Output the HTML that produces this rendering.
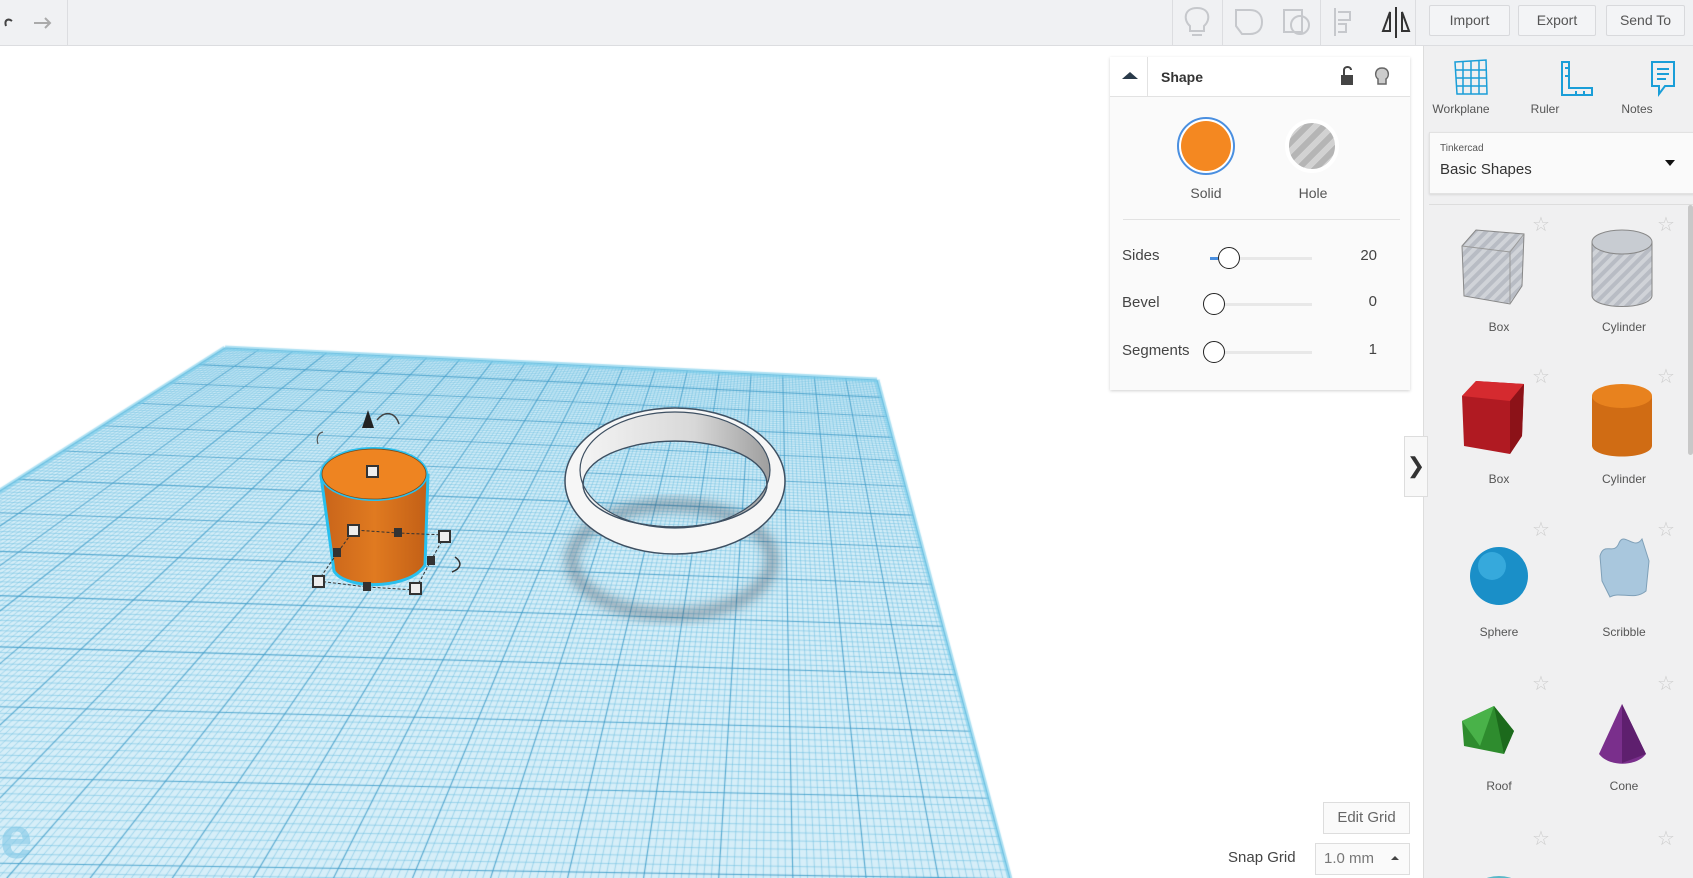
<!DOCTYPE html>
<html><head><meta charset="utf-8">
<style>
*{box-sizing:border-box;margin:0;padding:0}
body{width:1693px;height:878px;overflow:hidden;background:#fff;font-family:"Liberation Sans",sans-serif;color:#333;position:relative}
.abs{position:absolute}
#top{left:0;top:0;width:1693px;height:46px;background:#f0f1f3;border-bottom:1px solid #dcdde0}
.sep{position:absolute;top:0;width:1px;height:45px;background:#dcdde0}
.btn{position:absolute;top:5px;height:31px;border:1px solid #d8d9dc;background:#f3f4f6;border-radius:2px;font-size:14px;color:#555;text-align:center;line-height:29px}
#rp{left:1423px;top:46px;width:270px;height:832px;background:#f0f0f1;border-left:1px solid #ddd;overflow:hidden}
.lbl{position:absolute;font-size:12px;color:#555;text-align:center;width:100px}
#sp{left:1110px;top:57px;width:300px;height:333px;background:#fafafa;box-shadow:0 1px 3px rgba(0,0,0,.18)}
.row{position:absolute;left:12px;font-size:15px;color:#444}
.track{position:absolute;left:100px;width:102px;height:3px;background:#e8e8e8}
.knob{position:absolute;width:22px;height:22px;border:1.5px solid #222;border-radius:50%;background:#fff}
.val{position:absolute;right:33px;font-size:15px;color:#444}
.star{position:absolute;font-size:20px;color:#ccc}
.sl{position:absolute;font-size:12px;color:#555;width:120px;text-align:center}
</style></head><body>
<canvas id="cv" class="abs" width="1423" height="878" style="left:0;top:0"></canvas>

<svg class="abs" style="left:0;top:0" width="1423" height="878">
 <defs><filter id="bl"><feGaussianBlur stdDeviation="5"/></filter>
 <linearGradient id="og" x1="0" x2="1"><stop offset="0" stop-color="#c8641a"/><stop offset=".5" stop-color="#e07a20"/><stop offset="1" stop-color="#c25f16"/></linearGradient>
 <linearGradient id="wg" x1="0" x2="1"><stop offset="0" stop-color="#f4f4f4"/><stop offset=".6" stop-color="#d8d8d8"/><stop offset="1" stop-color="#9e9e9e"/></linearGradient></defs>
 <ellipse cx="672" cy="560" rx="100" ry="55" fill="none" stroke="rgba(60,70,80,.35)" stroke-width="14" filter="url(#bl)"/>
 <!-- ring body with hole -->
 <path fill-rule="evenodd" fill="#f6f6f6" stroke="#3e5062" stroke-width="1.5"
  d="M565 481 A110 73 0 1 0 785 481 A110 73 0 1 0 565 481Z M583 484 A92 43 0 1 0 767 484 A92 43 0 1 0 583 484Z"/>
 <!-- inner wall -->
 <path fill-rule="evenodd" fill="url(#wg)" stroke="#3e5062" stroke-width="1.2"
  d="M580 470 A95 58 0 1 0 770 470 A95 58 0 1 0 580 470Z M583 484 A92 43 0 1 0 767 484 A92 43 0 1 0 583 484Z"/>
 <!-- cylinder -->
 <path d="M321 476 L334 571 C345 590 410 590 425 565 L428 475Z" fill="url(#og)" stroke="#29c0ee" stroke-width="3"/>
 <ellipse cx="374" cy="474" rx="53" ry="26" fill="#ee8421" stroke="#29c0ee" stroke-width="2"/>
 <ellipse cx="374" cy="474" rx="52" ry="25" fill="#ee8421" stroke="#7a4a1a" stroke-width=".8"/>
 <g stroke="#333" stroke-width="1" stroke-dasharray="3 2" fill="none"><path d="M318 581 L367 587 L415 590 L445 535"/><path d="M318 581 L338 552 L354 530 L398 533 L445 535"/></g>
 <g fill="#333"><rect x="333" y="548" width="8" height="9"/><rect x="394" y="528" width="8" height="9"/><rect x="363" y="582" width="8" height="9"/><rect x="427" y="556" width="8" height="9"/></g>
 <g fill="#eee" stroke="#333" stroke-width="2"><rect x="367" y="466" width="11" height="11"/><rect x="348" y="525" width="11" height="11"/><rect x="439" y="531" width="11" height="11"/><rect x="313" y="576" width="11" height="11"/><rect x="410" y="583" width="11" height="11"/></g>
 <path d="M362 428 L368 410 L374 428Z" fill="#222"/>
 <path d="M377 420 C385 410 395 412 399 424" stroke="#444" stroke-width="1.5" fill="none"/>
 <path d="M318 444 C316 438 318 433 323 432" stroke="#555" stroke-width="1.2" fill="none"/>
 <path d="M455 557 C462 562 462 568 452 572" stroke="#333" stroke-width="1.5" fill="none"/>
 <text x="0" y="858" font-size="58" font-weight="bold" fill="rgba(130,200,230,.6)" font-family="Liberation Sans">e</text>
</svg>

<div id="top" class="abs">
 <svg class="abs" style="left:0;top:12px" width="60" height="20"><path d="M6 14 C4 8 8 6 12 9" stroke="#444" stroke-width="2" fill="none"/><path d="M34 11 H50 M45 6 L50 11 L45 16" stroke="#aaa" stroke-width="2" fill="none"/></svg>
 <div class="sep" style="left:67px"></div>
 <div class="sep" style="left:1172px"></div><div class="sep" style="left:1222px"></div><div class="sep" style="left:1320px"></div><div class="sep" style="left:1415px"></div>
 <svg class="abs" style="left:1180px;top:0" width="240" height="45" fill="none" stroke="#c6c8cc" stroke-width="2">
  <path d="M10 26 C3 20 4 8 17 8 C30 8 31 20 24 26 V31 H10Z M12 35 H22"/>
  <path d="M56 10 H70 C78 10 82 15 82 22 C82 30 77 34 70 34 H62 L56 26Z"/>
  <rect x="104" y="10" width="18" height="22"/><circle cx="120" cy="25" r="9"/>
  <path d="M155 8 V36 M158 12 H170 V20 H158 M158 24 H166 V32 H158"/>
  <path d="M203 31 L210 12 V31Z M216 7 V38 M222 12 V31 H229Z" stroke="#333"/>
 </svg>
 <div class="btn" style="left:1429px;width:81px">Import</div>
 <div class="btn" style="left:1518px;width:78px">Export</div>
 <div class="btn" style="left:1606px;width:79px">Send To</div>
</div>

<div id="rp" class="abs">
 <svg class="abs" style="left:28px;top:12px" width="240" height="44" fill="none" stroke="#1a9ed8" stroke-width="2">
  <path d="M3 4 L34 2 L35 36 L5 36Z M11 3 V36 M19 3 V36 M27 3 V36 M4 12 H35 M4 20 H35 M4 28 H35" stroke-width="1.5"/>
  <path d="M110 4 H117 V30 H140 V37 H110Z M113 10 H116 M113 18 H116 M124 33 V36 M132 33 V36"/>
  <path d="M200 4 H222 V28 H213 L207 36 V28 H200Z M205 11 H217 M205 16 H217 M205 21 H214"/>
 </svg>
 <div class="lbl" style="left:-13px;top:56px">Workplane</div>
 <div class="lbl" style="left:71px;top:56px">Ruler</div>
 <div class="lbl" style="left:163px;top:56px">Notes</div>
 <div class="abs" style="left:5px;top:86px;width:265px;height:62px;background:#fafafa;border:1px solid #e2e2e2;box-shadow:0 1px 2px rgba(0,0,0,.1)">
  <div class="abs" style="left:10px;top:10px;font-size:10px;color:#555">Tinkercad</div>
  <div class="abs" style="left:10px;top:28px;font-size:15px;color:#333">Basic Shapes</div>
  <div class="abs" style="left:235px;top:27px;border:5px solid transparent;border-top:6px solid #111"></div>
 </div>
 <div class="abs" style="left:5px;top:158px;width:265px;height:1px;background:#ddd"></div>
 <div class="abs" style="left:264px;top:159px;width:5px;height:250px;background:#c8c8c8;border-radius:3px"></div>
 <svg class="abs" style="left:0;top:160px" width="262" height="672">
  <defs><pattern id="hs" width="8" height="8" patternUnits="userSpaceOnUse" patternTransform="rotate(45)"><rect width="8" height="8" fill="#b8bcc4"/><rect width="4" height="8" fill="#d0d3d8"/></pattern></defs>
  <path d="M38 40 L52 24 L100 28 L98 80 L86 98 L40 90Z" fill="url(#hs)" stroke="#888"/>
  <path d="M38 40 L86 46 L100 28 M86 46 L86 98" stroke="#999" fill="none"/>
  <path d="M168 36 V90 C170 104 226 104 228 90 V36Z" fill="url(#hs)" stroke="#888"/><ellipse cx="198" cy="36" rx="30" ry="12" fill="#c8ccd2" stroke="#888"/>
  <path d="M38 190 L52 175 L100 178 L98 230 L86 248 L40 240Z" fill="#b01a22"/><path d="M38 190 L52 175 L100 178 L86 195Z" fill="#d52a2f"/><path d="M86 195 L100 178 L98 230 L86 248Z" fill="#8c1218"/>
  <path d="M168 190 V240 C170 254 226 254 228 240 V190Z" fill="#d06c14"/><ellipse cx="198" cy="190" rx="30" ry="12" fill="#e8821e"/>
  <circle cx="75" cy="370" r="29" fill="#1a8fc8"/><circle cx="68" cy="360" r="14" fill="#36a9dc"/>
  <path d="M176 350 C180 335 190 350 195 337 C200 325 210 345 218 333 L225 355 L222 385 C210 395 196 385 186 391 L178 375Z" fill="#a9c7dd" stroke="#7fa0b8"/>
  <path d="M38 515 L70 500 L90 525 L80 548 L40 540Z" fill="#2e8c2e"/><path d="M70 500 L90 525 L80 548Z" fill="#1c6a1c"/><path d="M38 515 L70 500 L56 540Z" fill="#49b249"/>
  <path d="M198 498 L175 548 C185 561 212 561 222 548Z" fill="#7a2f8c"/><path d="M198 498 L198 557 L222 548Z" fill="#5e1f6e"/>
  <ellipse cx="75" cy="690" rx="28" ry="20" fill="#5ab8c8"/><path d="M175 680 L225 677 L228 690 L172 693Z" fill="#c0202a"/>
 </svg>
 <span class="star" style="left:108px;top:166px">☆</span><span class="star" style="left:233px;top:166px">☆</span>
 <span class="star" style="left:108px;top:318px">☆</span><span class="star" style="left:233px;top:318px">☆</span>
 <span class="star" style="left:108px;top:471px">☆</span><span class="star" style="left:233px;top:471px">☆</span>
 <span class="star" style="left:108px;top:625px">☆</span><span class="star" style="left:233px;top:625px">☆</span>
 <span class="star" style="left:108px;top:780px">☆</span><span class="star" style="left:233px;top:780px">☆</span>
 <div class="sl" style="left:15px;top:274px">Box</div><div class="sl" style="left:140px;top:274px">Cylinder</div>
 <div class="sl" style="left:15px;top:426px">Box</div><div class="sl" style="left:140px;top:426px">Cylinder</div>
 <div class="sl" style="left:15px;top:579px">Sphere</div><div class="sl" style="left:140px;top:579px">Scribble</div>
 <div class="sl" style="left:15px;top:733px">Roof</div><div class="sl" style="left:140px;top:733px">Cone</div>
</div>

<div id="sp" class="abs">
 <div class="abs" style="left:0;top:0;width:300px;height:40px;background:#fff;border-bottom:1px solid #e2e2e2"></div>
 <div class="abs" style="left:37px;top:0;width:1px;height:40px;background:#e2e2e2"></div>
 <div class="abs" style="left:12px;top:15px;border:8px solid transparent;border-bottom:7px solid #2a3a4a;border-top:0"></div>
 <div class="abs" style="left:51px;top:12px;font-size:14px;font-weight:bold;color:#333">Shape</div>
 <svg class="abs" style="left:228px;top:6px" width="60" height="28"><rect x="3" y="12" width="12" height="10" fill="#444"/><path d="M6 12 V7 C6 3 13 3 13 7" stroke="#444" stroke-width="2" fill="none"/><path d="M40 16 C36 13 37 5 44 5 C51 5 52 13 48 16 V21 H40Z" fill="#ccc" stroke="#666" stroke-width="1.5"/></svg>
 <div class="abs" style="left:67px;top:60px;width:58px;height:58px;border-radius:50%;border:2px solid #4a8fe0;background:#fff"></div>
 <div class="abs" style="left:71px;top:64px;width:50px;height:50px;border-radius:50%;background:#f48821"></div>
 <div class="abs" style="left:175px;top:62px;width:54px;height:54px;border-radius:50%;background:repeating-linear-gradient(135deg,#b5b5b5 0 6px,#d2d2d2 6px 12px);border:4px solid #fff"></div>
 <div class="abs" style="left:76px;top:128px;font-size:14px;color:#555;width:40px;text-align:center">Solid</div>
 <div class="abs" style="left:183px;top:128px;font-size:14px;color:#555;width:40px;text-align:center">Hole</div>
 <div class="abs" style="left:13px;top:162px;width:277px;height:1px;background:#e2e2e2"></div>
 <div class="row" style="top:190px">Sides</div><div class="track" style="top:200px"></div><div class="abs" style="left:100px;top:200px;width:8px;height:3px;background:#4a8fe0"></div><div class="knob" style="left:108px;top:190px"></div><div class="val" style="top:190px">20</div>
 <div class="row" style="top:237px">Bevel</div><div class="track" style="top:246px"></div><div class="knob" style="left:93px;top:236px"></div><div class="val" style="top:236px">0</div>
 <div class="row" style="top:285px">Segments</div><div class="track" style="top:294px"></div><div class="knob" style="left:93px;top:284px"></div><div class="val" style="top:284px">1</div>
</div>

<div class="abs" style="left:1404px;top:436px;width:24px;height:61px;background:#f8f8f8;border:1px solid #ddd;font-size:22px;line-height:58px;text-align:center;color:#333">❯</div>
<div class="abs" style="left:1323px;top:802px;width:87px;height:32px;background:#fafafa;border:1px solid #ddd;font-size:15px;color:#666;text-align:center;line-height:30px">Edit Grid</div>
<div class="abs" style="left:1228px;top:849px;font-size:15px;color:#444">Snap Grid</div>
<div class="abs" style="left:1315px;top:843px;width:95px;height:32px;background:#fafafa;border:1px solid #ddd;font-size:15px;color:#777;line-height:30px;padding-left:8px">1.0 mm<span style="position:absolute;right:10px;top:12px;border:4px solid transparent;border-bottom:4px solid #444;border-top:0"></span></div>

<script>
(function(){
var c=document.getElementById('cv').getContext('2d');
c.fillStyle='#fff';c.fillRect(0,0,1423,878);
var P=[[225,348],[877,380],[1069,1100],[-958,1100]];
function H(p){var x0=p[0][0],y0=p[0][1],x1=p[1][0],y1=p[1][1],x2=p[2][0],y2=p[2][1],x3=p[3][0],y3=p[3][1];
var dx1=x1-x2,dx2=x3-x2,dy1=y1-y2,dy2=y3-y2,sx=x0-x1+x2-x3,sy=y0-y1+y2-y3;
var den=dx1*dy2-dx2*dy1,g=(sx*dy2-dx2*sy)/den,h=(dx1*sy-sx*dy1)/den;
return [x1-x0+g*x1,x3-x0+h*x3,x0,y1-y0+g*y1,y3-y0+h*y3,y0,g,h];}
var m=H(P);
function T(u,v){var w=m[6]*u+m[7]*v+1;return [(m[0]*u+m[1]*v+m[2])/w,(m[3]*u+m[4]*v+m[5])/w];}
c.beginPath();[[0,0],[1,0],[1,1],[0,1]].forEach(function(q,i){var p=T(q[0],q[1]);i?c.lineTo(p[0],p[1]):c.moveTo(p[0],p[1]);});c.closePath();
c.fillStyle='#d6eef8';c.fill();
var NU=200,NV=150;
function ln(u0,v0,u1,v1){var a=T(u0,v0),b=T(u1,v1);c.beginPath();c.moveTo(a[0],a[1]);c.lineTo(b[0],b[1]);c.stroke();}
c.lineWidth=0.7;c.strokeStyle='rgba(95,185,222,.7)';
for(var i=0;i<=NU;i++){if(i%10)ln(i/NU,0,i/NU,1);}
for(var j=0;j<=NV;j++){if(j%10)ln(0,j/NV,1,j/NV);}
c.lineWidth=1.1;c.strokeStyle='rgba(60,155,200,.85)';
for(i=0;i<=NU;i+=10)ln(i/NU,0,i/NU,1);
for(j=0;j<=NV;j+=10)ln(0,j/NV,1,j/NV);
c.lineWidth=5;c.strokeStyle='rgba(120,205,235,.6)';
ln(0,0,1,0);ln(1,0,1,1);ln(0,0,0,1);
})();
</script>
</body></html>
